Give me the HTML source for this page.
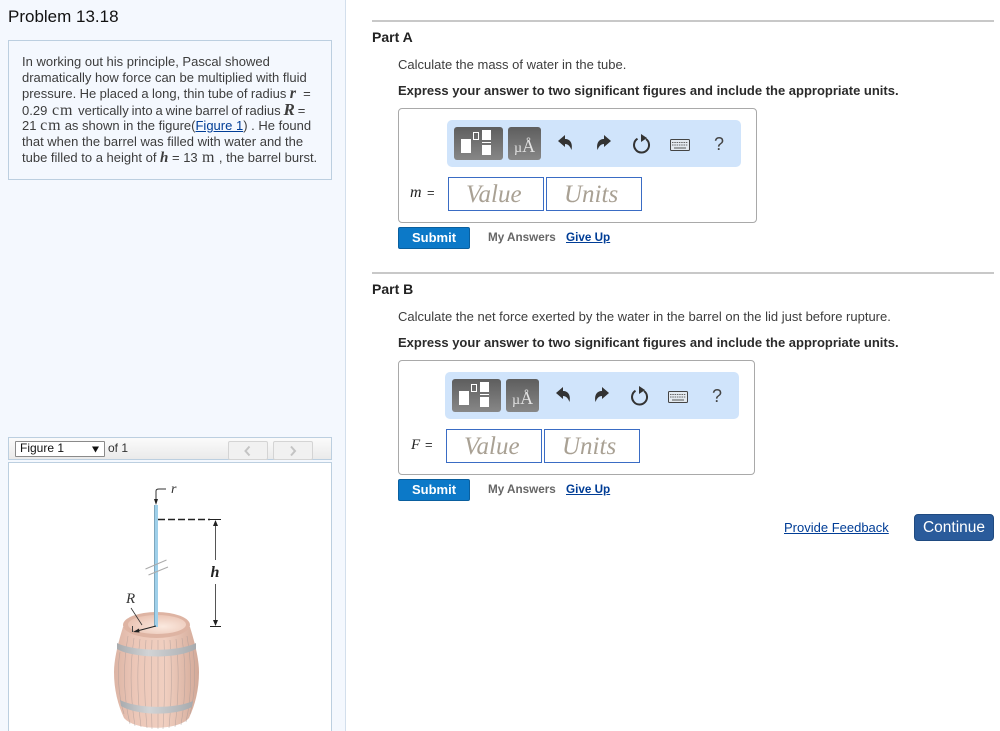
<!DOCTYPE html>
<html><head><meta charset="utf-8"><title>Problem 13.18</title>
<style>
html,body{margin:0;padding:0;background:#fff;overflow:hidden;width:1000px;height:731px}
#w0{position:relative;width:1000px;height:731px;overflow:hidden;font-family:"Liberation Sans",sans-serif;font-size:13px;color:#3d3d3d}
.a{position:absolute;white-space:nowrap}
.m{font-family:"Liberation Serif",serif}
.mi{font-family:"Liberation Serif",serif;font-style:italic;font-weight:bold}
.cm{font-family:"Liberation Serif",serif;font-size:16px;letter-spacing:1px;display:inline-block;width:25px;text-align:center;line-height:14px}
a{color:#003d96;text-decoration:underline}
.l{left:22px;line-height:16px;height:16px;color:#3d3d3d}
.box{position:absolute;border:1px solid #a9a9a9;border-radius:4px;background:#fff;box-sizing:border-box}
.tb{position:absolute;background:#d0e4fb;border-radius:5px}
.inp{position:absolute;box-sizing:border-box;border:1px solid #3a6cc4;background:#fff;font:italic 25px "Liberation Serif",serif;color:#a9a194;height:34px;line-height:33px;width:96px;padding-left:17px}
.sub{position:absolute;width:72px;height:22px;box-sizing:border-box;background:#0c79c8;border:1px solid #0a5f9e;border-radius:2px;color:#fff;font-weight:bold;font-size:13px;text-align:center;line-height:19px}
.hr{position:absolute;left:372px;width:622px;height:2px;background:#c8c8c8}
.b{font-weight:bold;color:#2b2b2b}
.ma{font-weight:bold;color:#666;font-size:11.700px;line-height:16px}
</style></head><body><div id="w0">
<div style="position:absolute;left:0;top:0;width:345px;height:731px;background:#f4f8fe;border-right:1px solid #d3dfec"></div>
<div class="a" style="left:8px;top:8px;font-size:17px;line-height:18px;color:#111">Problem 13.18</div>
<div style="position:absolute;left:8px;top:40px;width:324px;height:140px;box-sizing:border-box;border:1px solid #bccfe0"></div>
<div class="a l" style="top:54px">In working out his principle, Pascal showed</div>
<div class="a l" style="top:70px">dramatically how force can be multiplied with fluid</div>
<div class="a l" style="top:86px;word-spacing:-.2px">pressure. He placed a long, thin tube of radius <span class="mi" style="font-size:16px;display:inline-block;width:10px;line-height:14px">r</span> =</div>
<div class="a l" style="top:102px;word-spacing:-.7px">0.29 <span class="cm">cm</span> vertically into a wine barrel of radius <span class="mi" style="font-size:17px">R</span> =</div>
<div class="a l" style="top:118px">21 <span class="cm" style="width:21px">cm</span> as shown in the figure(<a href="#">Figure 1</a>) . He found</div>
<div class="a l" style="top:134px">that when the barrel was filled with water and the</div>
<div class="a l" style="top:150px">tube filled to a height of <span class="mi" style="font-size:15px">h</span> = 13 <span class="cm" style="width:14px;letter-spacing:0">m</span> , the barrel burst.</div>

<div style="position:absolute;left:8px;top:437px;width:324px;height:23px;box-sizing:border-box;border:1px solid #bccfe0;background:linear-gradient(#fbfbfb,#eaeaea)"></div>
<div style="position:absolute;left:15px;top:441px;width:90px;height:16px;box-sizing:border-box;border:1px solid #8a8a8a;background:#fff;border-radius:1px;font-size:12px;line-height:13px;padding-left:4px;color:#111">Figure 1</div>
<svg style="position:absolute;left:91px;top:446px" width="10" height="7"><path d="M1 0.500H8L4.500 6.500Z" fill="#111"/></svg>
<div class="a" style="left:108px;top:441px;line-height:15px;font-size:12px;color:#333">of 1</div>
<div style="position:absolute;left:228px;top:441px;width:40px;height:19px;box-sizing:border-box;border:1px solid #d4d4d4;border-radius:2px;background:#f1f1f1"></div>
<div style="position:absolute;left:273px;top:441px;width:40px;height:19px;box-sizing:border-box;border:1px solid #d4d4d4;border-radius:2px;background:#f1f1f1"></div>
<svg style="position:absolute;left:228px;top:441px" width="85" height="19" fill="none" stroke="#c4c4c4" stroke-width="2"><path d="M21.500 5.500L17.500 10L21.500 14.500"/><path d="M63 5.500L67 10L63 14.500"/></svg>
<div style="position:absolute;left:8px;top:462px;width:324px;height:280px;box-sizing:border-box;border:1px solid #bccfe0;background:#fff"></div>

<svg style="position:absolute;left:100px;top:470px" width="140" height="261" viewBox="100 470 140 261">
<defs>
<linearGradient id="w" x1="0" x2="1" y1="0" y2="0"><stop offset="0" stop-color="#dcb4a4"/><stop offset=".25" stop-color="#ecc7b8"/><stop offset=".6" stop-color="#f0cfc0"/><stop offset="1" stop-color="#d3a998"/></linearGradient>
<linearGradient id="s" x1="0" x2="1" y1="0" y2="0"><stop offset="0" stop-color="#a8abae"/><stop offset=".4" stop-color="#d2d4d6"/><stop offset="1" stop-color="#a8abae"/></linearGradient>
<radialGradient id="in" cx=".6" cy=".6" r=".7"><stop offset="0" stop-color="#fbe9df"/><stop offset="1" stop-color="#e8c0af"/></radialGradient>
</defs>
<path d="M123 627C119 640 114 658 114 672C114 690 118 705 124 718C135 731 178 731 189 718C195 705 199 690 199 672C199 658 194 640 190 627Z" fill="url(#w)"/>
<g stroke="#a99a96" stroke-width=".6" fill="none" opacity=".65">
<path d="M128 636C123 665 123 695 130 724M134 638C130 665 130 695 135 726M140 639C137 665 137 695 141 727M146 640C144 665 144 695 147 728M152 640C151 665 151 695 152 729M158 640C158 665 158 695 158 729M164 640C165 665 165 695 163 729M170 640C172 665 172 695 169 728M176 639C179 665 179 695 175 727M182 638C186 665 186 695 181 725M187 636C192 665 192 695 186 722M120 652C117 670 118 695 124 714M193 650C196 670 195 695 190 714"/>
</g>
<path d="M117 643C135 652 178 652 196 643L196 649C178 659 135 659 117 649Z" fill="url(#s)"/>
<path d="M120 700C138 709 175 709 193 701L192 707C175 716 138 716 121 706Z" fill="url(#s)"/>
<ellipse cx="156.500" cy="625" rx="33.500" ry="13" fill="#deb4a3"/>
<ellipse cx="157" cy="624.500" rx="29" ry="9.500" fill="url(#in)"/>
<rect x="154" y="505" width="4" height="122" fill="#9fd0ea"/>
<rect x="154" y="505" width="1" height="122" fill="#7ea7bd"/>
<path d="M145.500 569L166.500 560M148.500 575L168 567" stroke="#aaa" stroke-width="1" fill="none"/>
<path d="M156 500V491Q156 489 159 489H166" stroke="#333" fill="none" stroke-width="1"/>
<path d="M154 499H158L156 505Z" fill="#222"/>
<path d="M158 519.500H210" stroke="#222" stroke-width="1.500" stroke-dasharray="7 3" fill="none"/>
<path d="M210 519.500H221M210 626.500H221" stroke="#222" fill="none"/>
<path d="M215.500 523V560M215.500 584V624" stroke="#555" fill="none"/>
<path d="M213 526L215.500 520L218 526ZM213 620L215.500 626L218 620Z" fill="#222"/>
<text x="210.500" y="577" font-family="Liberation Serif" font-style="italic" font-weight="bold" font-size="16" fill="#222">h</text>
<text x="171" y="493" font-family="Liberation Serif" font-style="italic" font-size="14" fill="#333">r</text>
<text x="126" y="603" font-family="Liberation Serif" font-style="italic" font-size="15" fill="#333">R</text>
<path d="M131 608L142 625" stroke="#333" fill="none" stroke-width=".8"/>
<path d="M156 626L137 631" stroke="#222" fill="none" stroke-width="1"/>
<path d="M133 632L139 628.500L139.500 632.500Z" fill="#222"/>
<path d="M132.500 626V632" stroke="#444" fill="none"/>
</svg>

<!-- Part A -->
<div class="hr" style="top:20px"></div>
<div class="a b" style="left:372px;top:29px;font-size:14px;line-height:16px;color:#222">Part A</div>
<div class="a" style="left:398px;top:57px;line-height:16px">Calculate the mass of water in the tube.</div>
<div class="a b" style="left:398px;top:83px;line-height:16px;font-size:13px">Express your answer to two significant figures and include the appropriate units.</div>
<div class="box" style="left:398px;top:108px;width:359px;height:115px"></div>
<div class="tb" style="left:447px;top:120px;width:294px;height:47px"></div>
<svg style="position:absolute;left:447px;top:120px" width="294" height="47">
<defs><linearGradient id="g" x1="0" x2="0" y1="0" y2="1"><stop offset="0" stop-color="#5e5e5e"/><stop offset="1" stop-color="#878787"/></linearGradient></defs>
<rect x="7" y="7" width="49" height="33" rx="3" fill="url(#g)"/>
<rect x="61" y="7" width="33" height="33" rx="3" fill="url(#g)"/>
<rect x="14" y="19" width="10" height="14" fill="#fff"/>
<rect x="26.500" y="12.500" width="5" height="7" fill="none" stroke="#fff"/>
<rect x="35" y="10" width="9" height="10" fill="#fff"/><rect x="35" y="22" width="9" height="1" fill="#fff"/><rect x="35" y="25" width="9" height="10" fill="#fff"/>
<text x="67" y="32" font-family="Liberation Serif" fill="#e2e2e2"><tspan font-size="14">µ</tspan><tspan font-size="18">Å</tspan></text>
<path d="M111 21L118 15V19C123 19 126 23 124.500 30C123 26 121 24 118 24V27Z" fill="#333"/>
<path d="M164 21L157 15V19C152 19 149 23 150.500 30C152 26 154 24 157 24V27Z" fill="#333"/>
<path d="M190.500 18.700A7.500 7.500 0 1 0 199 19" fill="none" stroke="#333" stroke-width="2"/>
<path d="M194 14V22L200 18Z" fill="#333"/>
<rect x="223.500" y="19.500" width="19" height="11" rx="1" fill="#e4eaf0" stroke="#444"/>
<path d="M225 22.500H241M225 25H241" stroke="#666" stroke-dasharray="1.500 .8"/><path d="M227 28H239" stroke="#555"/>
<text x="267" y="30" font-family="Liberation Sans" font-size="18" fill="#444">?</text>
</svg>
<div class="a mi" style="left:410px;top:185px;font-size:16px;line-height:16px;font-weight:normal;color:#222">m</div>
<div class="a" style="left:427px;top:185px;line-height:16px">=</div>
<div class="inp" style="left:448px;top:177px">Value</div>
<div class="inp" style="left:546px;top:177px">Units</div>
<div class="sub" style="left:398px;top:227px">Submit</div>
<div class="a ma" style="left:488px;top:230px">My Answers</div>
<div class="a ma" style="left:566px;top:230px"><a href="#">Give Up</a></div>

<!-- Part B -->
<div class="hr" style="top:272px"></div>
<div class="a b" style="left:372px;top:281px;font-size:14px;line-height:16px;color:#222">Part B</div>
<div class="a" style="left:398px;top:309px;line-height:16px">Calculate the net force exerted by the water in the barrel on the lid just before rupture.</div>
<div class="a b" style="left:398px;top:335px;line-height:16px;font-size:13px">Express your answer to two significant figures and include the appropriate units.</div>
<div class="box" style="left:398px;top:360px;width:357px;height:115px"></div>
<div class="tb" style="left:445px;top:372px;width:294px;height:47px"></div>
<svg style="position:absolute;left:445px;top:372px" width="294" height="47">
<rect x="7" y="7" width="49" height="33" rx="3" fill="url(#g)"/>
<rect x="61" y="7" width="33" height="33" rx="3" fill="url(#g)"/>
<rect x="14" y="19" width="10" height="14" fill="#fff"/>
<rect x="26.500" y="12.500" width="5" height="7" fill="none" stroke="#fff"/>
<rect x="35" y="10" width="9" height="10" fill="#fff"/><rect x="35" y="22" width="9" height="1" fill="#fff"/><rect x="35" y="25" width="9" height="10" fill="#fff"/>
<text x="67" y="32" font-family="Liberation Serif" fill="#e2e2e2"><tspan font-size="14">µ</tspan><tspan font-size="18">Å</tspan></text>
<path d="M111 21L118 15V19C123 19 126 23 124.500 30C123 26 121 24 118 24V27Z" fill="#333"/>
<path d="M164 21L157 15V19C152 19 149 23 150.500 30C152 26 154 24 157 24V27Z" fill="#333"/>
<path d="M190.500 18.700A7.500 7.500 0 1 0 199 19" fill="none" stroke="#333" stroke-width="2"/>
<path d="M194 14V22L200 18Z" fill="#333"/>
<rect x="223.500" y="19.500" width="19" height="11" rx="1" fill="#e4eaf0" stroke="#444"/>
<path d="M225 22.500H241M225 25H241" stroke="#666" stroke-dasharray="1.500 .8"/><path d="M227 28H239" stroke="#555"/>
<text x="267" y="30" font-family="Liberation Sans" font-size="18" fill="#444">?</text>
</svg>
<div class="a mi" style="left:411px;top:437px;font-size:15px;line-height:16px;font-weight:normal;color:#222">F</div>
<div class="a" style="left:425px;top:437px;line-height:16px">=</div>
<div class="inp" style="left:446px;top:429px">Value</div>
<div class="inp" style="left:544px;top:429px">Units</div>
<div class="sub" style="left:398px;top:479px">Submit</div>
<div class="a ma" style="left:488px;top:482px">My Answers</div>
<div class="a ma" style="left:566px;top:482px"><a href="#">Give Up</a></div>

<div class="a" style="left:784px;top:520px;line-height:16px"><a href="#">Provide Feedback</a></div>
<div style="position:absolute;left:914px;top:514px;width:80px;height:27px;box-sizing:border-box;background:#2a5b9b;border:1px solid #1f4a80;border-radius:4px;color:#fff;font-size:15.500px;line-height:25px;text-align:center">Continue</div>
</div></body></html>
